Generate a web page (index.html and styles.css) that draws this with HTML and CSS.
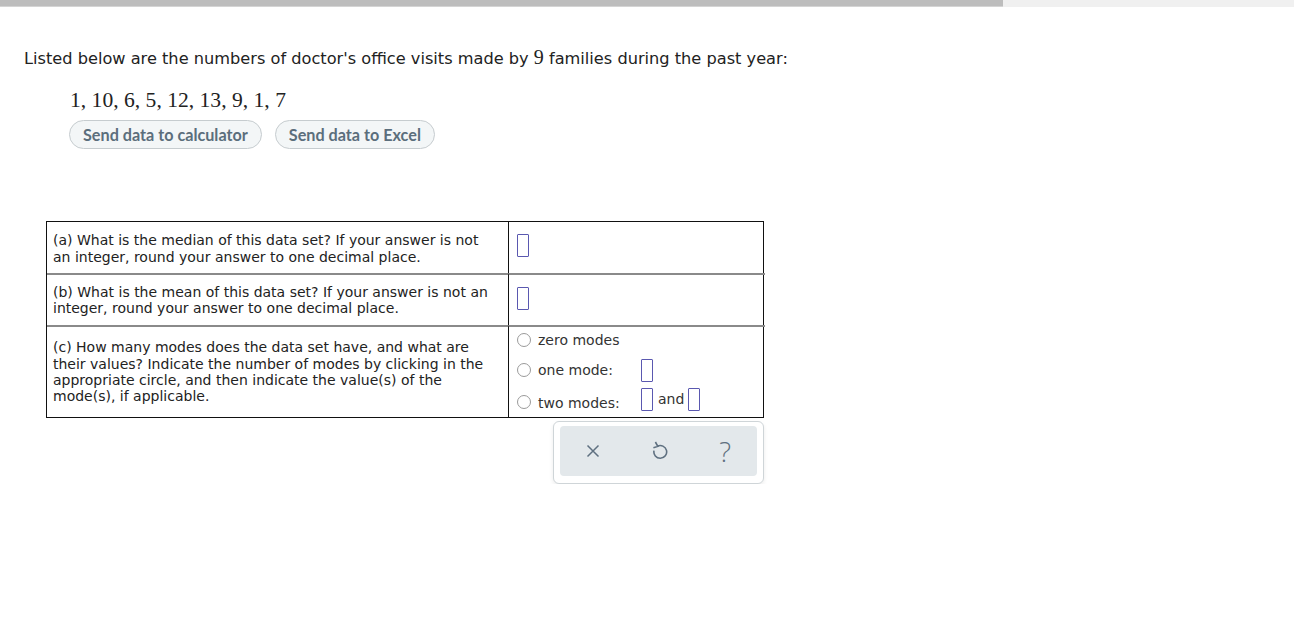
FILE: index.html
```html
<!DOCTYPE html>
<html>
<head>
<meta charset="utf-8">
<link rel="stylesheet" href="styles.css">
</head>
<body>
<div class="progress"><div class="progress-fill"></div><div class="progress-rest"></div></div>
<div class="content">
  <p class="intro">Listed below are the numbers of doctor's office visits made by <span class="math">9</span> families during the past year:</p>
  <div class="data">1, 10, 6, 5, 12, 13, 9, 1, 7</div>
  <div class="buttons">
    <button class="pill">Send data to calculator</button>
    <button class="pill">Send data to Excel</button>
  </div>
  <div class="qwrap">
    <div class="qgrid">
      <div class="q c1">(a) What is the median of this data set? If your answer is not an integer, round your answer to one decimal place.</div>
      <div class="a c1"><span class="box"></span></div>
      <div class="q c2">(b) What is the mean of this data set? If your answer is not an integer, round your answer to one decimal place.</div>
      <div class="a c2"><span class="box"></span></div>
      <div class="q c3">(c) How many modes does the data set have, and what are their values? Indicate the number of modes by clicking in the appropriate circle, and then indicate the value(s) of the mode(s), if applicable.</div>
      <div class="a c3 modes">
        <div class="opt o1"><span class="radio"></span><span class="lbl">zero modes</span></div>
        <div class="opt o2"><span class="radio"></span><span class="lbl">one mode:</span><span class="box"></span></div>
        <div class="opt o3"><span class="radio"></span><span class="lbl">two modes:</span><span class="box"></span><span class="and">and</span><span class="box"></span></div>
      </div>
    </div>
    <div class="toolrow">
      <div class="tool">
        <div class="tool-inner">
          <svg class="ic" width="14" height="14" viewBox="0 0 14 14"><path d="M1.5 1.5 L12.5 12.5 M12.5 1.5 L1.5 12.5" stroke="#5f7080" stroke-width="1.5" fill="none"/></svg>
          <svg class="ic" width="16" height="20" viewBox="0 0 16 20"><path d="M5.4 5.2 A6.4 6.4 0 1 1 2 9.6" stroke="#5f7080" stroke-width="1.6" fill="none"/><path d="M3.4 1 L5.8 5.4 L1.4 6.8" stroke="#5f7080" stroke-width="1.6" fill="none"/></svg>
          <span class="qm">?</span>
        </div>
      </div>
    </div>
  </div>
</div>
</body>
</html>
```

FILE: styles.css
```css
html, body { margin: 0; padding: 0; background: #fff; }
body { font-family: "DejaVu Sans", Verdana, sans-serif; color: #222; }

.progress { display: flex; height: 7px; }
.progress-fill { width: 1003px; background: #bdbdbd; border-bottom: 1px solid #d4d4d4; box-sizing: border-box; }
.progress-rest { flex: 1; background: #f0f0f0; }

.content { padding-left: 24px; }

.intro { margin: 40px 0 0 0; font-size: 16.2px; line-height: 20px; height: 20px; color: #222; }
.math { font-family: "Liberation Serif", "Times New Roman", serif; font-size: 20px; line-height: 1; }

.data { margin: 20px 0 0 46px; font-family: "Liberation Serif", "Times New Roman", serif; font-size: 21.6px; line-height: 26px; height: 26px; color: #222; }

.buttons { display: flex; gap: 13px; margin: 7px 0 0 45px; }
.pill { font-family: Lato, "Open Sans", sans-serif; font-weight: 700; font-size: 16.2px; color: #5b6e7c; background: #f3f6f7; border: 1px solid #c6cccf; border-radius: 15px; height: 29px; padding: 0 13px; line-height: 27px; box-sizing: border-box; }

.qwrap { margin: 72px 0 0 22px; width: 718px; }
.qgrid { display: grid; grid-template-columns: 462px 256px; grid-template-rows: 51px 52px 92px; border: 1px solid #111; box-sizing: border-box; width: 718px; }
.c2, .c3 { border-top: 2px solid #8a8a8a; }
.q { border-right: 1px solid #111; padding: 0 11px 0 6px; display: flex; align-items: center; font-size: 14px; letter-spacing: 0; line-height: 16.3px; color: #222; }
.c1.q { padding-top: 2px; }
.a { padding: 12px 0 0 8px; }

.box { display: inline-block; width: 10px; height: 21px; border: 1.5px solid #5a58b0; border-radius: 1px; }

.modes { padding-top: 3px; }
.opt { display: flex; align-items: center; font-size: 14px; color: #333; }
.o1 { height: 20px; }
.o2 { height: 24px; margin-top: 8px; }
.o3 { height: 24px; margin-top: 5px; align-items: flex-end; }
.radio { width: 12px; height: 12px; border: 1px solid #9a9a9a; border-radius: 50%; margin-right: 7px; flex: none; box-sizing: content-box; }
.o3 .radio { margin-bottom: 2px; }
.lbl { width: 103px; line-height: 16px; }
.o1 .lbl { width: auto; }
.and { margin: 0 4px 4px 5px; line-height: 16px; }

.toolrow { display: flex; justify-content: flex-end; margin-top: 3px; }
.tool { width: 211px; height: 63px; box-sizing: border-box; border: 1px solid #cfd5d8; border-radius: 6px; background: #fff; padding: 4px 6px 7px 6px; box-shadow: 0 2px 4px rgba(0,0,0,0.08); }
.tool-inner { height: 100%; background: #e3e8eb; border-radius: 4px; display: flex; align-items: center; justify-content: space-around; }
.ic { display: block; }
.qm { font-family: "Open Sans", sans-serif; font-weight: 300; font-size: 28px; color: #5f7080; line-height: 24px; }
```
